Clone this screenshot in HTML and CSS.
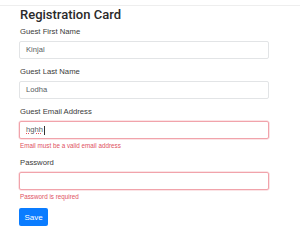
FILE: index.html
```html
<!DOCTYPE html>
<html lang="en">
<head>
  <meta charset="UTF-8">
  <meta name="viewport" content="width=device-width, initial-scale=1.0">
  <title>Registration Card</title>
  <link rel="stylesheet" href="styles.css">
</head>
<body>
  <div class="page">
    <form class="card-form">
      <h2 class="title">Registration Card</h2>

      <div class="form-group">
        <label class="label">Guest First Name</label>
        <div class="input">Kinjal</div>
      </div>

      <div class="form-group">
        <label class="label">Guest Last Name</label>
        <div class="input">Lodha</div>
      </div>

      <div class="form-group">
        <label class="label">Guest Email Address</label>
        <div class="input is-invalid"><span class="typo">hghh</span><span class="caret"></span></div>
        <div class="error">Email must be a valid email address</div>
      </div>

      <div class="form-group">
        <label class="label">Password</label>
        <div class="input is-invalid"></div>
        <div class="error">Password is required</div>
      </div>

      <button type="button" class="btn-save">Save</button>
    </form>
  </div>
</body>
</html>
```

FILE: styles.css
```css
/* base */
body {
  margin: 0;
  font-family: 'Liberation Sans', Arial, sans-serif;
  color: #212529;
  background-color: #fff;
}

.page {
  margin-top: 5px;
  border-top: 1px solid #eeeeee;
  padding: 1px 0 0 19px;
}

.card-form {
  width: 250px;
}

.title {
  margin: 0 0 3px 0;
  font-family: Roboto, 'Liberation Sans', sans-serif;
  font-size: 13px;
  line-height: 16px;
  font-weight: 500;
  color: #2a2a2a;
  padding-left: 1px;
}

/* fields */
.form-group {
  margin-bottom: 7px;
}

.label {
  display: block;
  font-size: 7.7px;
  line-height: 12px;
  margin-bottom: 3px;
  padding-left: 1px;
  color: #3a3a3a;
}

.input {
  box-sizing: border-box;
  height: 18px;
  border: 1px solid #e2e4e6;
  border-radius: 2px;
  padding: 0 6px;
  font-size: 7.6px;
  line-height: 16px;
  color: #555b61;
  display: flex;
  align-items: center;
}

.input.is-invalid {
  border-color: #f1a3ab;
  box-shadow: 0 0 0 0.5px #f8c9ce;
}

.typo {
  text-decoration: underline dotted #e5525f;
  text-decoration-thickness: 1px;
  text-underline-offset: 1px;
}

.caret {
  display: inline-block;
  width: 0;
  height: 9px;
  border-left: 1px solid #333;
  margin-left: 1px;
}

.error {
  margin-top: 2px;
  font-size: 6.3px;
  line-height: 9px;
  color: #e0525f;
  padding-left: 1px;
}

/* button */
.btn-save {
  display: block;
  width: 29px;
  height: 18px;
  padding: 0;
  border: none;
  border-radius: 2px;
  background-color: #0a7cff;
  color: white;
  font-family: 'Liberation Sans', Arial, sans-serif;
  font-size: 8px;
  cursor: pointer;
}

.btn-save:hover {
  background-color: #0069d9;
}
```
